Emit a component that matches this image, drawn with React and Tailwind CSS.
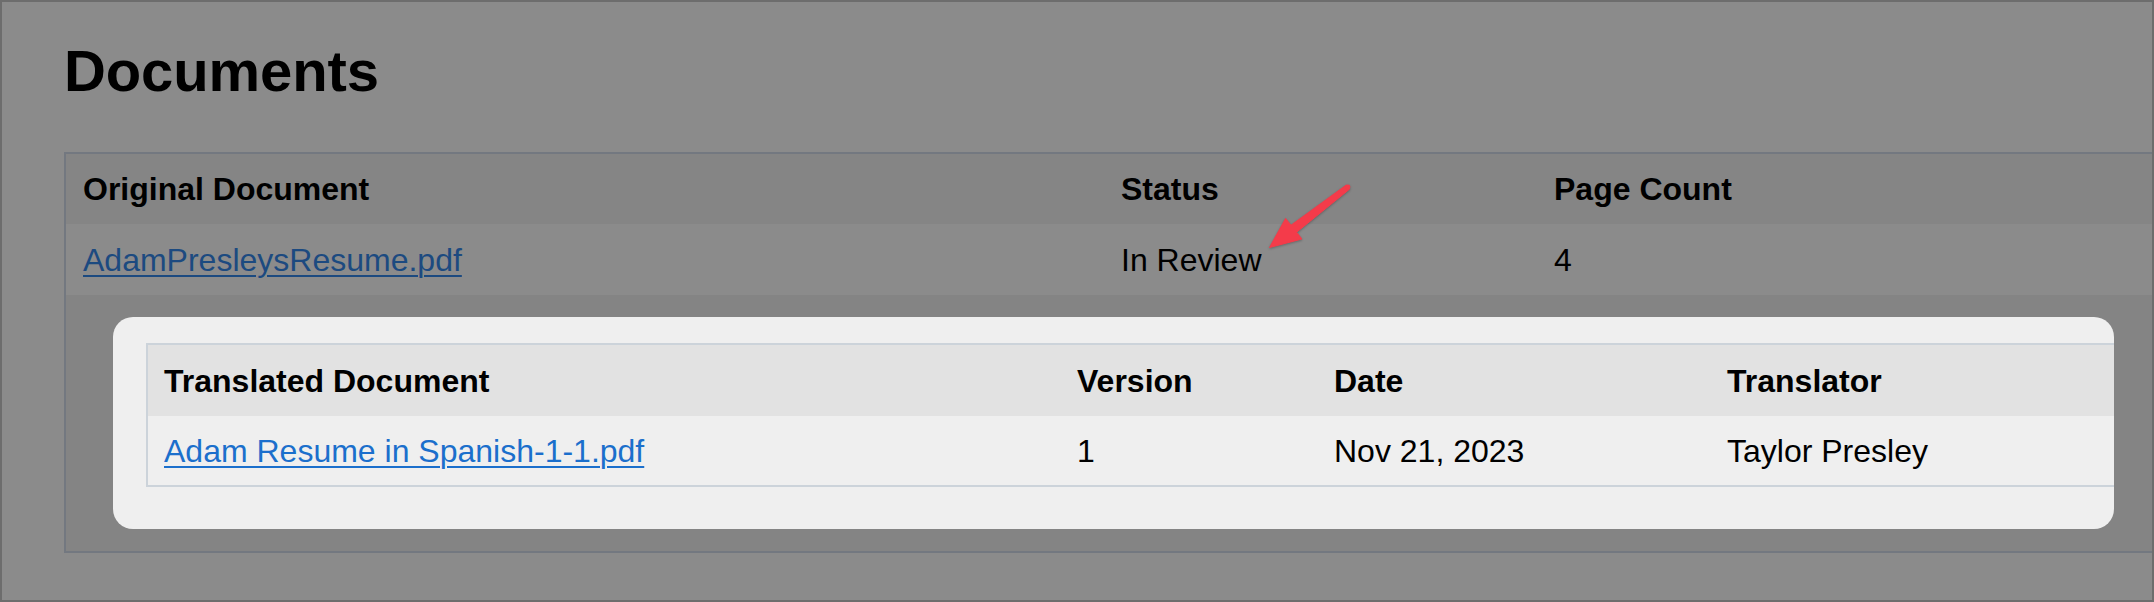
import React from 'react';

const font = { fontFamily: '"Liberation Sans", Arial, sans-serif' };

const Arrow = () => (
  <svg
    className="absolute left-[1260px] top-[175px] drop-shadow-[0_1px_1px_rgba(0,0,0,0.25)]"
    width="100"
    height="80"
    viewBox="1260 175 100 80"
  >
    <polygon
      points="1344.4,182.9 1289,223.2 1283.6,216.4 1267.5,245.5 1299.9,237 1294.6,230.2 1347.6,187.1"
      fill="#f43b4a"
      strokeLinejoin="round"
      stroke="#f43b4a"
      strokeWidth="1"
    />
    <circle cx="1346" cy="185" r="2.4" fill="#f43b4a" />
  </svg>
);

const App = () => {
  return (
    <div
      className="relative w-[2154px] h-[602px] overflow-hidden bg-[#8b8b8b] border-2 border-[#6d6d6d] text-black"
      style={font}
    >
      <h1 className="pt-[40px] pl-[62px] text-[58px] leading-none font-bold tracking-[-0.1px]">
        Documents
      </h1>

      {/* Original documents table */}
      <div className="mt-[52px] ml-[62px] w-[2092px] border-2 border-[#737880] text-[32px] leading-[36px]">
        <div className="grid grid-cols-[1038px_433px_1fr] h-[70px] items-center bg-[#858585] font-bold">
          <div className="pl-[17px]">Original Document</div>
          <div className="pl-[17px]">Status</div>
          <div className="pl-[17px]">Page Count</div>
        </div>
        <div className="grid grid-cols-[1038px_433px_1fr] h-[71px] items-center bg-[#8b8b8b]">
          <div className="pl-[17px]">
            <a href="#" className="text-[#1c4a80] underline underline-offset-[4px] decoration-[2px]">
              AdamPresleysResume.pdf
            </a>
          </div>
          <div className="pl-[17px]">In Review</div>
          <div className="pl-[17px]">4</div>
        </div>

        {/* Expanded translations */}
        <div className="bg-[#848484] pt-[22px] pb-[22px] pl-[47px]">
          <div className="w-[2001px] rounded-[20px] bg-[#efefef] pt-[26px] pb-[42px] pl-[33px]">
            <div className="border-2 border-r-0 border-[#ccd3da]">
              <div className="grid grid-cols-[913px_257px_393px_1fr] h-[71px] items-center bg-[#e2e2e2] font-bold">
                <div className="pl-[16px]">Translated Document</div>
                <div className="pl-[16px]">Version</div>
                <div className="pl-[16px]">Date</div>
                <div className="pl-[16px]">Translator</div>
              </div>
              <div className="grid grid-cols-[913px_257px_393px_1fr] h-[69px] items-center bg-[#efefef]">
                <div className="pl-[16px]">
                  <a href="#" className="text-[#1b6fcc] underline underline-offset-[4px] decoration-[2px]">
                    Adam Resume in Spanish-1-1.pdf
                  </a>
                </div>
                <div className="pl-[16px]">1</div>
                <div className="pl-[16px]">Nov 21, 2023</div>
                <div className="pl-[16px]">Taylor Presley</div>
              </div>
            </div>
          </div>
        </div>
      </div>

      <Arrow />
    </div>
  );
};

export default App;
